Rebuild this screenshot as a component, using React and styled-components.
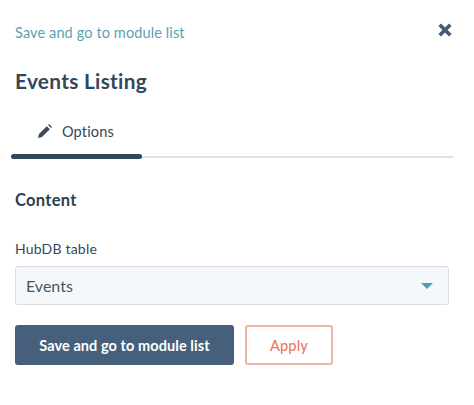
import React from "react";
import styled, { createGlobalStyle } from "styled-components";

const Global = createGlobalStyle`
  html, body { margin: 0; padding: 0; background: #fff; }
  body { font-family: "Lato", "Open Sans", sans-serif; color: #33475b; }
`;
const Panel = styled.div`
  width: 474px; height: 405px; box-sizing: border-box;
  padding: 23px 21px 0 15px; display: flex; flex-direction: column; overflow: hidden;
`;
const TopBar = styled.div`
  display: flex; justify-content: space-between; align-items: flex-start; height: 20px;
`;
const BackLink = styled.a`
  font-size: 14.5px; line-height: 20px; color: #5a9fb3; letter-spacing: 0.12px;
`;
const CloseButton = styled.svg`
  width: 14px; height: 14px; margin-right: 1px; fill: #425b76; display: block;
`;
const Title = styled.h1`
  margin: 25px 0 0; font-size: 20.8px; line-height: 26px; font-weight: 700; color: #33475b; letter-spacing: 0.3px;
`;
const Tabs = styled.div`
  margin: 19px 0 0 -4px; display: flex; flex-direction: column;
`;
const Tab = styled.div`
  width: 131px; height: 36px; box-sizing: border-box; padding-left: 27px;
  display: flex; align-items: center; gap: 10px;
  font-size: 14.5px; color: #33475b; letter-spacing: 0.15px;
`;
const TabTrack = styled.div`
  height: 2px; margin-top: 7px; background: #dde1ea; position: relative;
`;
const TabIndicator = styled.div`
  position: absolute; left: 0; top: -2px; width: 131px; height: 5px; border-radius: 3px; background: #33475b;
`;
const SectionTitle = styled.h2`
  margin: 31px 0 0; font-size: 16.5px; line-height: 22px; font-weight: 700; color: #2d3e50; letter-spacing: 0.3px;
`;
const FieldLabel = styled.label`
  margin-top: 28px; font-size: 14px; line-height: 20px; color: #33475b; letter-spacing: 0.2px; display: block;
`;
const Select = styled.div`
  margin-top: 7px; width: 434px; height: 39px; box-sizing: border-box;
  border: 1px solid #d6dfe8; border-radius: 3px; background: #f5f8fa;
  padding: 0 15px 0 10px; display: flex; align-items: center; justify-content: space-between;
  font-size: 16px; color: #44566a; letter-spacing: 0px;
`;
const Caret = styled.span`
  width: 0; height: 0; border-left: 6px solid transparent; border-right: 6px solid transparent;
  border-top: 6px solid #4f9fb8;
`;
const Actions = styled.div`
  margin-top: 20px; display: flex; gap: 11px;
`;
const PrimaryButton = styled.button`
  width: 219px; height: 40px; border: 0; border-radius: 3px; background: #465f7b; color: #fff;
  font: 700 14.5px "Lato", sans-serif; letter-spacing: 0.08px; padding: 0;
`;
const SecondaryButton = styled.button`
  width: 88px; height: 40px; box-sizing: border-box; border: 2px solid #eeb3a3; border-radius: 3px; background: #fff;
  color: #e8795f; font: 500 14.5px "Lato", sans-serif; letter-spacing: 0.2px; padding: 0;
`;

export default function App() {
  return (
    <Panel>
      <Global />
      <TopBar>
        <BackLink>Save and go to module list</BackLink>
        <CloseButton viewBox="0 0 14 14" aria-label="Close">
          <path d="M3 .4 7 4.4 11 .4 13.6 3 9.6 7 13.6 11 11 13.6 7 9.6 3 13.6.4 11 4.4 7 .4 3Z" />
        </CloseButton>
      </TopBar>
      <Title>Events Listing</Title>
      <Tabs>
        <Tab>
          <svg width="14" height="14" viewBox="0 0 14 14" fill="#3c4a5a">
            <path d="M0 14 1 10 8.8 2.2 11.8 5.2 4 13Z" />
            <path d="M10 1 11 0 14 3 13 4Z" />
          </svg>
          Options
        </Tab>
        <TabTrack>
          <TabIndicator />
        </TabTrack>
      </Tabs>
      <SectionTitle>Content</SectionTitle>
      <FieldLabel>HubDB table</FieldLabel>
      <Select>
        Events
        <Caret />
      </Select>
      <Actions>
        <PrimaryButton>Save and go to module list</PrimaryButton>
        <SecondaryButton>Apply</SecondaryButton>
      </Actions>
    </Panel>
  );
}
